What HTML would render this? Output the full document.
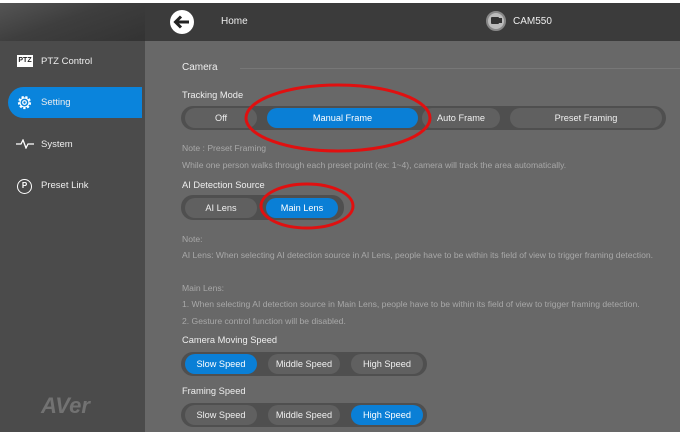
<!DOCTYPE html>
<html><head><style>
*{margin:0;padding:0;box-sizing:border-box}
body{width:680px;height:432px;overflow:hidden;background:#fff;font-family:"Liberation Sans",sans-serif;position:relative}
.a{position:absolute}
.side{left:0;top:3px;width:145px;height:429px;background:#4b4b4b}
.sidetop{left:0;top:3px;width:145px;height:38px;background:linear-gradient(160deg,#555 0%,#3e3e3e 45%,#333 100%)}
.hdr{left:145px;top:3px;width:535px;height:38px;background:#3b3b3b}
.main{left:145px;top:41px;width:535px;height:391px;background:#686868}
.t{color:#eee;font-size:10px;white-space:nowrap}
.n{color:#a8a8a8;font-size:8.6px;white-space:nowrap}
.grp{background:#4f4f4f;border-radius:12px}
.b{background:#606060;border-radius:11px;color:#f0f0f0;font-size:9.2px;text-align:center;display:flex;align-items:center;justify-content:center}
.s{background:#0a7fd6;color:#fff}
</style></head><body>
<div class="a side"></div><div class="a sidetop"></div>
<div class="a hdr"></div><div class="a main"></div>
<div class="a" style="left:170px;top:10px;width:24px;height:24px;border-radius:50%;background:#fff"></div>
<svg class="a" style="left:170px;top:10px" width="24" height="24"><path d="M19 12H6M11 6.5L5.5 12 11 17.5" stroke="#222" stroke-width="3" fill="none"/></svg>
<div class="a t" style="left:221px;top:16px;font-size:10px">Home</div>
<div class="a" style="left:486px;top:11px;width:20px;height:20px;border-radius:50%;background:#bbb;border:2px solid #888"></div>
<div class="a" style="left:491px;top:17px;width:8px;height:7px;background:#333;border-radius:1px"></div>
<div class="a" style="left:498px;top:18px;width:4px;height:5px;background:#333"></div>
<div class="a t" style="left:513px;top:16px">CAM550</div>

<div class="a" style="left:17px;top:55px;width:16px;height:12px;background:#fff;color:#222;font-size:7px;font-weight:bold;text-align:center;line-height:12px">PTZ</div>
<div class="a t" style="left:41px;top:56px;font-size:9.5px">PTZ Control</div>
<div class="a" style="left:8px;top:87px;width:134px;height:31px;background:#0a84dc;border-radius:16px 0 0 16px"></div>
<svg class="a" style="left:16px;top:94px" width="17" height="17" viewBox="0 0 17 17"><circle cx="8.5" cy="8.5" r="5.5" fill="none" stroke="#fff" stroke-width="2.2" stroke-dasharray="2.2 1.6"/><circle cx="8.5" cy="8.5" r="4.5" fill="none" stroke="#fff" stroke-width="1.2"/><circle cx="8.5" cy="8.5" r="1.8" fill="none" stroke="#fff" stroke-width="1.2"/></svg>
<div class="a t" style="left:41px;top:97px;font-size:9.5px">Setting</div>
<svg class="a" style="left:16px;top:139px" width="18" height="10"><path d="M0 5H5L7 1 10 9 12 5H18" stroke="#fff" stroke-width="1.3" fill="none"/></svg>
<div class="a t" style="left:41px;top:139px;font-size:9.5px">System</div>
<div class="a" style="left:17px;top:179px;width:15px;height:15px;border:1.5px solid #fff;border-radius:50%;color:#fff;font-size:8px;font-weight:bold;text-align:center;line-height:12px">P</div>
<div class="a t" style="left:41px;top:180px;font-size:9.5px">Preset Link</div>
<div class="a" style="left:41px;top:393px;color:#727272;font-size:22px;font-weight:bold;font-style:italic">AVer</div>

<div class="a t" style="left:182px;top:62px">Camera</div>
<div class="a" style="left:240px;top:68px;width:440px;height:1px;background:#777"></div>
<div class="a t" style="left:182px;top:90px;font-size:9.3px">Tracking Mode</div>
<div class="a grp" style="left:181px;top:106px;width:485px;height:24px"></div>
<div class="a b" style="left:185px;top:108px;width:72px;height:20px">Off</div>
<div class="a b s" style="left:267px;top:108px;width:151px;height:20px">Manual Frame</div>
<div class="a b" style="left:422px;top:108px;width:78px;height:20px">Auto Frame</div>
<div class="a b" style="left:510px;top:108px;width:152px;height:20px">Preset Framing</div>
<div class="a n" style="left:182px;top:143px">Note : Preset Framing</div>
<div class="a n" style="left:182px;top:160px">While one person walks through each preset point (ex: 1~4), camera will track the area automatically.</div>
<div class="a t" style="left:182px;top:180px;font-size:9.3px">AI Detection Source</div>
<div class="a grp" style="left:181px;top:195px;width:163px;height:25px"></div>
<div class="a b" style="left:185px;top:198px;width:72px;height:20px">AI Lens</div>
<div class="a b s" style="left:266px;top:198px;width:72px;height:20px">Main Lens</div>
<div class="a n" style="left:182px;top:234px">Note:</div>
<div class="a n" style="left:182px;top:250px">AI Lens: When selecting AI detection source in AI Lens, people have to be within its field of view to trigger framing detection.</div>
<div class="a n" style="left:182px;top:283px">Main Lens:</div>
<div class="a n" style="left:182px;top:299px">1. When selecting AI detection source in Main Lens, people have to be within its field of view to trigger framing detection.</div>
<div class="a n" style="left:182px;top:316px">2. Gesture control function will be disabled.</div>
<div class="a t" style="left:182px;top:335px;font-size:9.3px">Camera Moving Speed</div>
<div class="a grp" style="left:181px;top:352px;width:246px;height:24px"></div>
<div class="a b s" style="left:185px;top:354px;width:72px;height:20px">Slow Speed</div>
<div class="a b" style="left:268px;top:354px;width:72px;height:20px">Middle Speed</div>
<div class="a b" style="left:351px;top:354px;width:72px;height:20px">High Speed</div>
<div class="a t" style="left:182px;top:386px;font-size:9.3px">Framing Speed</div>
<div class="a grp" style="left:181px;top:403px;width:246px;height:24px"></div>
<div class="a b" style="left:185px;top:405px;width:72px;height:20px">Slow Speed</div>
<div class="a b" style="left:268px;top:405px;width:72px;height:20px">Middle Speed</div>
<div class="a b s" style="left:351px;top:405px;width:72px;height:20px">High Speed</div>

<svg class="a" style="left:0;top:0" width="680" height="432"><ellipse cx="338" cy="118" rx="92" ry="33" fill="none" stroke="#e01010" stroke-width="3"/><ellipse cx="307" cy="206" rx="46" ry="22" fill="none" stroke="#e01010" stroke-width="3"/></svg>
</body></html>
